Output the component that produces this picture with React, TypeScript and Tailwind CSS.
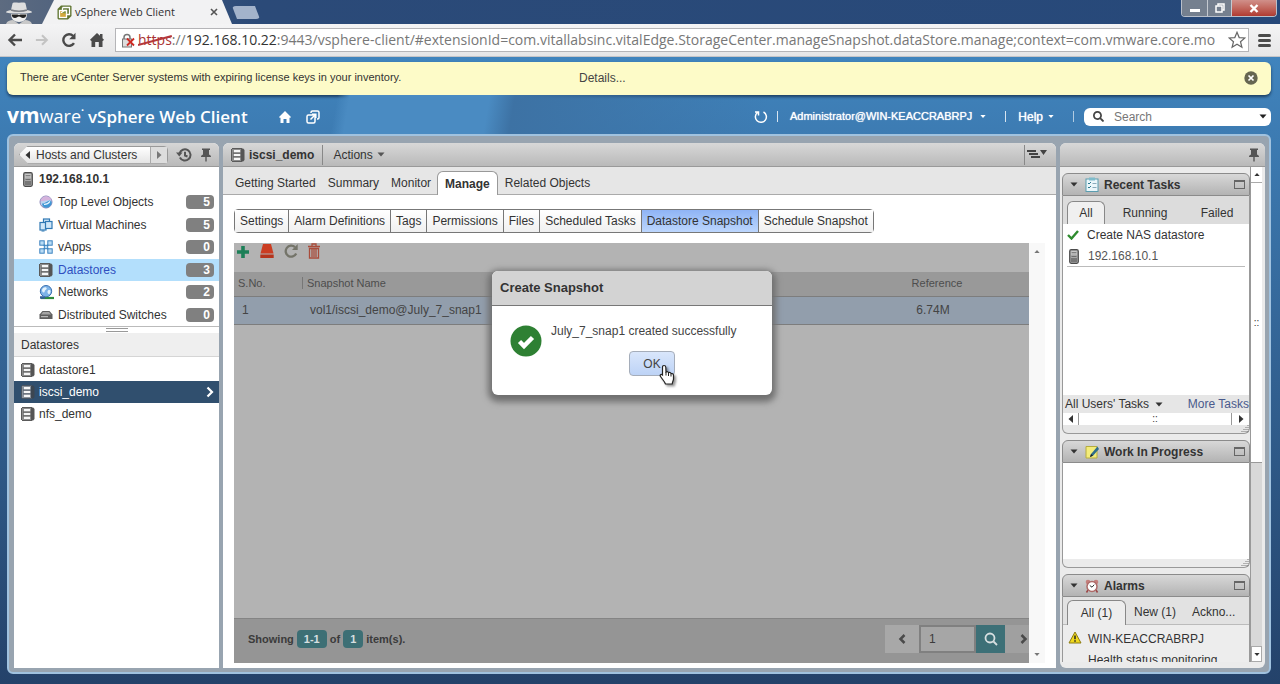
import React from "react";
import { FaHome, FaSearch } from "react-icons/fa";

const SANS = "font-['Liberation_Sans',Arial,sans-serif]";
const HUMAN = "font-['Open_Sans','Noto_Sans',sans-serif]";

function Caret({ className = "" }: { className?: string }) {
  return (
    <svg aria-hidden="true" viewBox="0 0 8 5" className={`h-[5px] w-2 shrink-0 fill-current ${className}`}>
      <path d="M0.5 0.5h7L4 4.5z" />
    </svg>
  );
}

function TriLeft() {
  return (
    <svg aria-hidden="true" viewBox="0 0 5 8" className="h-2 w-[5px] fill-current">
      <path d="M5 0v8L0.5 4z" />
    </svg>
  );
}

function TriRight() {
  return (
    <svg aria-hidden="true" viewBox="0 0 5 8" className="h-2 w-[5px] fill-current">
      <path d="M0 0v8l4.500-4z" />
    </svg>
  );
}

function DatastoreIcon({ light = false }: { light?: boolean }) {
  return (
    <svg aria-hidden="true" viewBox="0 0 14 14" className="h-[14px] w-[14px] shrink-0">
      <path d="M1 1h9v12H1z" fill={light ? "#8a929c" : "#8c8c8c"} />
      <path d="M10 0.500h2.200L13.500 2v10l-1.300 1.500H10z" fill={light ? "#3c4651" : "#555"} />
      <path d="M1 0.500h10M1 13.500h10M0.5 1v12" stroke={light ? "#4b5561" : "#5a5a5a"} />
      <path d="M3 2h6v2.600H3zM3 5.700h6v2.600H3zM3 9.400h6V12H3z" fill="#f6f6f6" />
      <path d="M2 5.100h8M2 8.900h8" stroke={light ? "#4b5561" : "#555"} />
    </svg>
  );
}

function HostIcon() {
  return (
    <svg aria-hidden="true" viewBox="0 0 10 15" className="h-[15px] w-[10px] shrink-0">
      <rect x="0.7" y="0.7" width="8.600" height="13.600" rx="1.500" fill="#a9a9a9" stroke="#4b4b4b" strokeWidth="1.200" />
      <path d="M2.300 2.500h5.400v3.500H2.300z" fill="#e9e9e9" />
      <path d="M2.500 3.500h5M2.500 5h5M2.500 7.500h5" stroke="#555" strokeWidth="0.700" />
      <path d="M2 9h6v4H2z" fill="#777" />
    </svg>
  );
}

function PinIcon() {
  return (
    <svg aria-hidden="true" viewBox="0 0 12 14" className="h-[14px] w-3 fill-[#555]">
      <path d="M2 0.500h8v1.500H9v4.500c1.300.4 2 1.200 2 2.500H1c0-1.300.7-2.100 2-2.500V2H2zM5.300 9h1.400v4.500H5.300z" />
    </svg>
  );
}

function TopLevelIcon() {
  return (
    <svg aria-hidden="true" viewBox="0 0 14 14" className="h-[14px] w-[14px]">
      <circle cx="7" cy="7" r="6" fill="#bcd3f0" stroke="#8a86b8" />
      <path d="M1.500 6C2 2.500 5 1 7.500 1.200 10 1.500 12 3 12.700 5.500 9 4 5 7 1.500 6z" fill="#d5b3dc" />
      <path d="M3 8.500c0 3 2.500 4.500 5 4.200 2.500-.4 4.500-2.500 4.700-5-.2-1.500-1-2.200-2-2.200C9 5.500 6 8.800 3 8.500z" fill="#3f97d4" />
      <path d="M5 9.300c2.500.2 4.500-1 6-3" stroke="#e8f4ff" fill="none" strokeWidth="1.200" />
    </svg>
  );
}

function VmIcon() {
  return (
    <svg aria-hidden="true" viewBox="0 0 14 14" className="h-[14px] w-[14px]">
      <g fill="#cfe6f8" stroke="#2f78b4" strokeWidth="1.200">
        <rect x="4.500" y="1" width="6" height="7" />
        <rect x="1" y="4.500" width="6" height="7.500" />
        <rect x="6.500" y="3.500" width="6.500" height="7" />
      </g>
      <path d="M2.500 13h3" stroke="#2f78b4" />
    </svg>
  );
}

function VAppIcon() {
  return (
    <svg aria-hidden="true" viewBox="0 0 14 14" className="h-[14px] w-[14px]">
      <path d="M4 4l6 6M10 4l-6 6" stroke="#4f8fc6" strokeWidth="1.500" />
      <g fill="#b9dcf6" stroke="#3d83bf">
        <rect x="0.8" y="0.8" width="4.400" height="4.400" />
        <rect x="8.800" y="0.8" width="4.400" height="4.400" />
        <rect x="0.8" y="8.800" width="4.400" height="4.400" />
        <rect x="8.800" y="8.800" width="4.400" height="4.400" />
        <rect x="5.300" y="5.300" width="3.400" height="3.400" />
      </g>
    </svg>
  );
}

function NetworkIcon() {
  return (
    <svg aria-hidden="true" viewBox="0 0 15 15" className="h-[15px] w-[15px]">
      <path d="M2 13h13" stroke="#2f8a3c" strokeWidth="2.200" />
      <path d="M1 12.500h5" stroke="#35609a" strokeWidth="2.500" />
      <circle cx="7" cy="6.200" r="5.700" fill="#7db3e8" stroke="#3a70b0" />
      <path d="M3 5c.5-2 2.500-3 4-2.500s.5 2-.5 2.500S6 7 5 7.500 3 6.500 3 5zM9 5.500c1-.8 2.500-.3 2.500.9S10.500 9.500 9.500 9 8 6.300 9 5.500z" fill="#e4f3fc" />
    </svg>
  );
}

function SwitchIcon() {
  return (
    <svg aria-hidden="true" viewBox="0 0 14 10" className="h-[10px] w-[14px]">
      <path d="M3.500 1h7L13.500 4.500V9h-13V4.500z" fill="#5f5f5f" />
      <path d="M4 2h6l2 2.500H2z" fill="#a5a5a5" />
      <path d="M2 6.700h7" stroke="#ccc" />
    </svg>
  );
}

const inventory = [
  { label: "Top Level Objects", count: 5, icon: <TopLevelIcon /> },
  { label: "Virtual Machines", count: 5, icon: <VmIcon /> },
  { label: "vApps", count: 0, icon: <VAppIcon /> },
  { label: "Datastores", count: 3, icon: <DatastoreIcon />, active: true },
  { label: "Networks", count: 2, icon: <NetworkIcon /> },
  { label: "Distributed Switches", count: 0, icon: <SwitchIcon /> },
];

function BrowserChrome() {
  return (
    <div className={`shrink-0 ${HUMAN}`}>
      <div className="flex h-6 items-start bg-linear-to-r from-[#5d6b80] via-[#2b4a78] via-20% to-[#27497a] pr-[3px]">
        <svg aria-label="Incognito" role="img" viewBox="0 0 30 22" className="mt-[2px] ml-1 h-[22px] w-[30px] shrink-0">
          <path d="M7 8l1.500-6.500C9 0 11 .3 15 .8 19 .3 21 0 21.500 1.500L23 8c3 .8 5 1.300 5 2.200 0 1.800-26 1.800-26 0C2 9.300 4 8.800 7 8z" fill="#dedede" />
          <path d="M7 8c4 1.500 12 1.500 16 0" stroke="#7b7f86" strokeWidth="1.500" fill="none" />
          <path d="M7 12h16c0 5-3 8-8 8s-8-3-8-8z" fill="#eee" />
          <path d="M7.500 12.500h6c.5 0 .9.500 1.500.500s1-.5 1.500-.5h6c-.5 2.500-1.500 3.500-3.500 3.500-1.800 0-2.500-1.500-4-1.500s-2.200 1.500-4 1.500c-2 0-3-1-3.500-3.500z" fill="#222" />
          <path d="M2 22c1-3 4-4 7-4l6 4 6-4c3 0 6 1 7 4z" fill="#c9c9c9" />
        </svg>
        <div className="ml-2 flex h-6 w-[190px] items-center bg-[#f2f2f3] pl-[15px] [clip-path:polygon(12px_0,180px_0,190px_100%,0_100%)]">
          <svg aria-hidden="true" viewBox="0 0 15 15" className="h-[15px] w-[15px] shrink-0">
            <path d="M4 0.500h9.500l1 1V11L11 14.500H1.500l-1-1V4z" fill="#5f7430" />
            <g fill="none" stroke="#fff" strokeWidth="1.300">
              <path d="M5.500 2.500h7v7h-3" />
              <path d="M5.500 5.500v-3" />
              <rect x="2.500" y="5.500" width="7" height="7" fill="#d2a93f" />
              <path d="M4.500 8V7.500l3-2h2v3" fill="#7f9440" />
            </g>
          </svg>
          <span className="ml-[3px] text-[11px] text-[#333]">vSphere Web Client</span>
          <button aria-label="Close tab" className="mr-[14px] ml-auto text-[#555]">
            <svg viewBox="0 0 8 8" className="h-2 w-2">
              <path d="M1 1l6 6M7 1L1 7" stroke="currentColor" strokeWidth="1.600" />
            </svg>
          </button>
        </div>
        <button aria-label="New tab" className="mt-[6px] h-[13px] w-7 rounded-sm bg-[#a3b3cb] [clip-path:polygon(0_0,82%_0,100%_100%,18%_100%)]" />
        <div className="ml-auto flex h-[17px] overflow-hidden rounded-b-sm border border-t-0 border-[#b8bfca]">
          <button aria-label="Minimize" className="flex w-[26px] items-center justify-center border-r border-[#c4c9d0] bg-[#75808f]">
            <span className="mt-1 h-[3px] w-[10px] bg-white" />
          </button>
          <button aria-label="Restore" className="flex w-6 items-center justify-center border-r border-[#c4c9d0] bg-[#75808f]">
            <svg viewBox="0 0 10 10" className="h-[10px] w-[10px]" fill="none" stroke="#fff" strokeWidth="1.500">
              <path d="M3 2.500V1h6v6H7.500" />
              <rect x="1" y="3" width="6" height="6" />
            </svg>
          </button>
          <button aria-label="Close" className="flex w-[44px] items-center justify-center bg-linear-to-b from-[#d0908a] to-[#b03a31]">
            <svg viewBox="0 0 10 9" className="h-[9px] w-[10px]">
              <path d="M1.500 1l7 7M8.500 1l-7 7" stroke="#fff" strokeWidth="2.400" />
            </svg>
          </button>
        </div>
      </div>
      <div className="flex h-[33px] items-center border-b border-[#c5c5c8] bg-linear-to-b from-[#f4f4f5] to-[#e6e6e7] text-[#444]">
        <button aria-label="Back" className="ml-[7px]">
          <svg viewBox="0 0 16 14" className="h-[14px] w-4" fill="none" stroke="#4a4a4a" strokeWidth="2.400">
            <path d="M15 7H2.500M8 1.500L2.500 7 8 12.500" />
          </svg>
        </button>
        <button aria-label="Forward" className="ml-3">
          <svg viewBox="0 0 16 14" className="h-[14px] w-[14px]" fill="none" stroke="#c3c3c3" strokeWidth="2.400">
            <path d="M1 7h12.500M8 1.500L13.500 7 8 12.500" />
          </svg>
        </button>
        <button aria-label="Reload" className="ml-3">
          <svg viewBox="0 0 16 16" className="h-4 w-4">
            <path d="M13 11.200A5.800 5.800 0 1 1 12.200 4" fill="none" stroke="#4a4a4a" strokeWidth="2.400" />
            <path d="M14.500 0.800v6.400H8.200z" fill="#4a4a4a" />
          </svg>
        </button>
        <button aria-label="Home" className="ml-3">
          <svg viewBox="0 0 16 16" className="h-4 w-4 fill-[#4a4a4a]">
            <path d="M8 1l3 2.800V2h2.500v4.200L15 7.800l-1.200 1.200-.3-.3V15H9.800v-5H6.200v5H2.500V8.700l-.3.300L1 7.800z" />
          </svg>
        </button>
        <div className="ml-[10px] flex h-6 min-w-0 flex-1 items-center border border-[#b5b5b8] bg-white pl-[5px] text-sm">
          <svg aria-hidden="true" viewBox="0 0 14 15" className="h-[15px] w-[14px] shrink-0">
            <path d="M3 6V4.500a3 3 0 0 1 6 0V6" fill="none" stroke="#777" strokeWidth="1.500" />
            <rect x="1.500" y="6" width="9" height="8" fill="#ddd" stroke="#777" />
            <path d="M6 5.500l7 7M13 5.500l-7 7" stroke="#cf2a23" strokeWidth="1.800" />
          </svg>
          <label htmlFor="url" className="ml-[3px] flex text-sm">
            <span className="relative text-[#a33]">
              https
              <svg aria-hidden="true" viewBox="0 0 34 14" preserveAspectRatio="none" className="absolute top-1 left-0 h-[14px] w-full">
                <path d="M0 11L34 2" stroke="#b5373a" strokeWidth="2" />
              </svg>
            </span>
            <span className="text-[#777]">://</span>
            <span className="text-[#333]">192.168.10.22</span>
          </label>
          <input
            id="url"
            aria-label="Address"
            className="min-w-0 flex-1 bg-transparent text-sm text-[#777] outline-none"
            defaultValue=":9443/vsphere-client/#extensionId=com.vitallabsinc.vitalEdge.StorageCenter.manageSnapshot.dataStore.manage;context=com.vmware.core.mo"
          />
          <button aria-label="Bookmark" className="mr-[2px]">
            <svg viewBox="0 0 18 18" className="h-[18px] w-[18px]" fill="none" stroke="#666" strokeWidth="1.200">
              <path d="M9 1.300l2.200 5.300 5.700.4-4.400 3.700 1.400 5.600L9 13.200l-4.900 3.100 1.400-5.600L1.100 7l5.700-.4z" />
            </svg>
          </button>
        </div>
        <button aria-label="Menu" className="mx-[9px] flex flex-col gap-[2px]">
          <span className="h-[3px] w-[13px] rounded-sm bg-[#4a4a4a]" />
          <span className="h-[3px] w-[13px] rounded-sm bg-[#4a4a4a]" />
          <span className="h-[3px] w-[13px] rounded-sm bg-[#4a4a4a]" />
        </button>
      </div>
    </div>
  );
}

function Masthead() {
  return (
    <header className="mr-[2px] flex h-[39px] shrink-0 items-center bg-[linear-gradient(100deg,transparent_0,transparent_26%,#4a8bc2_27%,#4a8bc2_38%,#3d72a4_40%,transparent_60%)] pt-1 text-xs text-white">
      <span className={`flex items-baseline text-[17px] ${HUMAN}`}>
        <b className="text-[21px] leading-5">vm</b>
        <span className="text-lg leading-5">ware</span>
        <span className="mr-1 self-start text-[8px]">•</span>
        <span className="font-semibold">vSphere Web Client</span>
      </span>
      <button aria-label="Home" className="ml-[30px]">
        <svg viewBox="0 0 14 14" className="h-[14px] w-[14px] fill-white">
          <path d="M7 1l6 6-1 1-.5-.4V13H8.500V9h-3v4h-3V7.600L2 8 1 7z" />
        </svg>
      </button>
      <button aria-label="Open new window" className="ml-[14px]">
        <svg viewBox="0 0 14 14" className="h-[14px] w-[14px]" fill="none" stroke="#fff" strokeWidth="1.500">
          <path d="M5 3V2.500A1.500 1.500 0 0 1 6.500 1h5A1.500 1.500 0 0 1 13 2.500v5A1.500 1.500 0 0 1 11.500 9H11" />
          <rect x="1" y="5" width="8" height="8" rx="1.500" />
          <path d="M4.500 9.500l5-5M6 4.200h3.800V8" />
        </svg>
      </button>
      <button aria-label="Refresh" className="ml-auto">
        <svg viewBox="0 0 14 14" className="h-[14px] w-[14px]" fill="none" stroke="#fff" strokeWidth="1.500">
          <path d="M9.500 2a5.500 5.500 0 1 1-6 .5M1 2h3.500v3.500" />
        </svg>
      </button>
      <span className="ml-[9px] h-[11px] w-px bg-white/80" />
      <button className="ml-3 flex items-center gap-[7px] text-[11px] [text-shadow:0_0_1px_#fff]">
        Administrator@WIN-KEACCRABRPJ <Caret className="scale-75" />
      </button>
      <span className="ml-[18px] h-[11px] w-px bg-white/80" />
      <button className="ml-3 flex items-center gap-1 [text-shadow:0_0_1px_#fff]">
        Help <Caret className="scale-75" />
      </button>
      <span className="ml-[18px] h-[11px] w-px bg-white/60" />
      <label className="ml-[10px] flex h-[18px] w-[187px] items-center rounded-md bg-white pl-[9px] text-[#555]">
        <FaSearch className="h-[11px] w-[11px] shrink-0 text-[#444]" />
        <input aria-label="Search" placeholder="Search" className="ml-[10px] min-w-0 flex-1 bg-transparent text-xs outline-none placeholder:text-[#777]" />
        <Caret className="mr-1 text-[#222]" />
      </label>
    </header>
  );
}

function Navigator() {
  return (
    <nav className="flex w-[205px] shrink-0 flex-col overflow-hidden rounded-t-md bg-white">
      <div className="flex h-6 shrink-0 items-center border-b border-[#999] bg-linear-to-b from-[#d6d6d6] to-[#b9b9b9] pl-[5px]">
        <div className="flex h-[18px] flex-1 items-stretch rounded-r-sm border border-[#999] bg-linear-to-b from-white to-[#e4e4e4] [clip-path:polygon(0_50%,9px_0,100%_0,100%_100%,9px_100%)]">
          <button className="flex flex-1 items-center gap-[6px] pl-[5px] text-[#333]">
            <TriLeft /> Hosts and Clusters
          </button>
          <button aria-label="Forward" className="flex w-[17px] items-center justify-center border-l border-[#aaa] bg-[#ddd] text-[#777]">
            <TriRight />
          </button>
        </div>
        <button aria-label="Recent objects" className="mx-2">
          <svg viewBox="0 0 16 14" className="h-[14px] w-4" fill="none" stroke="#555" strokeWidth="2">
            <path d="M3.500 5.500a5.600 5.600 0 1 1 .4 4M9 3.800V7.500l2.500 1" />
            <path d="M0 4.500h6.500L3.300 8.500z" fill="#555" stroke="none" />
          </svg>
        </button>
        <button aria-label="Pin" className="mr-[7px]">
          <PinIcon />
        </button>
      </div>
      <div className="flex h-6 shrink-0 items-center gap-[6px] pl-[9px] font-bold text-[#333]">
        <HostIcon /> 192.168.10.1
      </div>
      <ul className="grid h-[135px] shrink-0 grid-rows-6">
        {inventory.map((it) => (
          <li key={it.label} className={it.active ? "flex bg-[#b3dffc]" : "flex"}>
            <a href="#" className={`flex flex-1 items-center pr-[5px] pl-[25px] ${it.active ? "text-[#2f4fc0]" : "text-[#333]"}`}>
              <span className="flex w-[19px] items-center">{it.icon}</span>
              {it.label}
              <span className="ml-auto h-[14px] w-7 rounded-sm bg-[#808080] pr-1 text-right leading-[14px] font-bold text-white">{it.count}</span>
            </a>
          </li>
        ))}
      </ul>
      <div className="flex h-[7px] shrink-0 items-center justify-center border-t border-[#bbb]">
        <span className="h-1 w-[22px] border-y border-[#999]" />
      </div>
      <h2 className="flex h-6 shrink-0 items-center border-b border-[#d5d5d5] bg-[#efefef] pl-[7px] text-[#333]">Datastores</h2>
      <ul className="pt-[2px]">
        {["datastore1", "iscsi_demo", "nfs_demo"].map((name) => {
          const on = name === "iscsi_demo";
          return (
            <li key={name}>
              <a href="#" className={`flex h-[22px] items-center gap-1 pl-[7px] ${on ? "bg-[#304f6e] text-white" : "text-[#333]"}`}>
                <DatastoreIcon light={on} /> {name}
                {on && (
                  <svg aria-hidden="true" viewBox="0 0 8 12" className="mr-[5px] ml-auto h-3 w-2" fill="none" stroke="#fff" strokeWidth="2.200">
                    <path d="M1.500 1.500L6 6l-4.500 4.500" />
                  </svg>
                )}
              </a>
            </li>
          );
        })}
      </ul>
    </nav>
  );
}

const subTabs = ["Settings", "Alarm Definitions", "Tags", "Permissions", "Files", "Scheduled Tasks", "Datastore Snapshot", "Schedule Snapshot"];

function SnapshotDialog() {
  return (
    <div
      role="dialog"
      aria-labelledby="dlg-title"
      className="absolute top-7 left-[258px] flex h-[124px] w-[280px] flex-col rounded-md bg-white shadow-[0_3px_6px_4px_#707070]"
    >
      <h3 id="dlg-title" className="flex h-[35px] items-center rounded-t-md border-b border-[#777] bg-[#d3d3d3] pl-2 text-[13px] font-bold text-[#333]">
        Create Snapshot
      </h3>
      <div className="flex pt-[19px] pl-[18px]">
        <svg aria-hidden="true" viewBox="0 0 32 32" className="h-8 w-8 shrink-0">
          <circle cx="16" cy="16" r="15.500" fill="#2e8033" />
          <path d="M9.500 16.500l4.500 4.500 8.500-8.500" fill="none" stroke="#fff" strokeWidth="4.500" />
        </svg>
        <div className="ml-[9px] text-[#444]">
          <p className="text-xs leading-3">July_7_snap1 created successfully</p>
          <button className="mt-[14px] ml-[78px] h-[25px] w-[46px] rounded-sm border border-[#a5adba] bg-linear-to-b from-[#d9e6fb] to-[#bdd3f6] text-xs">
            OK
          </button>
        </div>
      </div>
      <svg aria-hidden="true" viewBox="0 0 18 22" className="absolute top-[93px] left-[167px] h-[22px] w-[18px] drop-shadow-[2px_2px_1px_rgba(0,0,0,0.4)]">
        <path
          d="M5 1.500c1.200 0 1.700.7 1.800 1.800L7 8c1-.6 2.200-.3 2.500.7 1-.5 2.200-.2 2.500.9 1.300-.4 2.500.3 2.500 1.900V15c0 1.500-1 2.500-1.300 5H6.500C6 18 3.500 15.500 1.500 12.500.5 11 2 9.800 3.500 11V3.300C3.500 2.200 4 1.500 5 1.500z"
          fill="#fff"
          stroke="#222"
          strokeWidth="1.200"
        />
        <path d="M7 8v3.500M9.500 9v3M12 10v2.500" stroke="#222" />
      </svg>
    </div>
  );
}

function Workspace() {
  return (
    <main className="flex min-w-0 flex-1 flex-col overflow-hidden rounded-t-md bg-white text-[#333]">
      <div className="flex h-6 shrink-0 items-center border-b border-[#999] bg-linear-to-b from-[#d8d8d8] to-[#b9b9b9] pl-2">
        <DatastoreIcon />
        <h1 className="ml-1 font-bold">iscsi_demo</h1>
        <button className="ml-2 flex h-5 items-center gap-1 border-l border-[#888] pl-[10px]">
          Actions <Caret className="text-[#555]" />
        </button>
        <button aria-label="View options" className="ml-auto flex h-5 w-8 items-center justify-center border-l border-[#888] pr-2">
          <svg viewBox="0 0 20 9" className="h-[9px] w-5 fill-[#444]">
            <path d="M0 0h9v2H0zM2 3h9v2H2zM4 6h9v2H4zM13 0h7l-3.500 5z" />
          </svg>
        </button>
      </div>
      <div role="tablist" className="flex h-7 shrink-0 items-end border-b border-[#aaa] bg-[#e6e6e6] pl-[6px]">
        <button role="tab" className="h-[23px] px-[6px]">Getting Started</button>
        <button role="tab" className="h-[23px] px-[6px]">Summary</button>
        <button role="tab" className="h-[23px] px-[6px]">Monitor</button>
        <button role="tab" aria-selected="true" className="-mb-px h-6 rounded-t-md border border-b-0 border-[#999] bg-white px-[7px] font-bold">Manage</button>
        <button role="tab" className="h-[23px] px-[7px]">Related Objects</button>
      </div>
      <div className="flex min-h-0 flex-1 flex-col px-[11px] pt-[14px] pb-[5px]">
        <div role="tablist" className="flex h-6 shrink-0 self-start rounded-sm border border-[#777]">
          {subTabs.map((t) => (
            <button
              key={t}
              role="tab"
              className={`border-r border-[#777] px-[5px] last:border-r-0 ${
                t === "Datastore Snapshot" ? "bg-linear-to-b from-[#8fb4f5] to-[#bcd6fd]" : "bg-linear-to-b from-white to-[#f0f0f0]"
              }`}
            >
              {t}
            </button>
          ))}
        </div>
        <div className="mt-[10px] flex min-h-0 flex-1">
          <section className="relative flex min-w-0 flex-1 flex-col bg-[#b3b3b3]">
            <div className="flex h-[29px] shrink-0 items-start gap-[10px] pl-[2px]">
              <button aria-label="Add snapshot" className="pt-[2px]">
                <svg viewBox="0 0 14 14" className="h-[14px] w-[14px]">
                  <path d="M7 1v12M1 7h12" stroke="#1c7f57" strokeWidth="3.600" />
                </svg>
              </button>
              <button aria-label="Restore snapshot">
                <svg viewBox="0 0 14 16" className="h-4 w-[14px]">
                  <path d="M3 1h8l2.500 9.500H.5z" fill="#cb3d22" />
                  <path d="M.3 11.500h13.400V15H.3z" fill="#b5351d" />
                </svg>
              </button>
              <button aria-label="Refresh">
                <svg viewBox="0 0 14 16" className="h-4 w-[14px]">
                  <path d="M12.200 10.500A5.500 5.500 0 1 1 11 4.200" fill="none" stroke="#747469" strokeWidth="2.300" />
                  <path d="M13.700 1v6H8z" fill="#747469" />
                </svg>
              </button>
              <button aria-label="Delete">
                <svg viewBox="0 0 12 16" className="h-4 w-3" fill="none" stroke="#a94c3b" strokeWidth="1.300">
                  <path d="M0 3.500h12M4 3V1h4v2M1.500 5.500h9V15h-9zM4 6v8M6 6v8M8 6v8" />
                </svg>
              </button>
            </div>
            <table className="w-full table-fixed border-collapse text-[#444]">
              <colgroup>
                <col className="w-[68px]" />
                <col />
                <col className="w-48" />
              </colgroup>
              <thead>
                <tr className="h-6 bg-[#999] text-[11px] text-[#4d4d4d]">
                  <th className="pl-1 text-left font-normal">S.No.</th>
                  <th className="text-left font-normal">
                    <span className="border-l border-[#777] pl-1">Snapshot Name</span>
                  </th>
                  <th className="pl-2 text-center font-normal">Reference</th>
                </tr>
              </thead>
              <tbody>
                <tr className="h-7 border-y border-[#7d7d7d] bg-[#929eac]">
                  <td className="pl-2">1</td>
                  <td className="pl-2">vol1/iscsi_demo@July_7_snap1</td>
                  <td className="text-center">6.74M</td>
                </tr>
              </tbody>
            </table>
            <footer className="mt-auto flex h-[45px] items-center border-t border-[#848484] bg-[#959595] pb-1 pl-[14px] text-[11px] font-bold text-[#3b3b3b]">
              Showing
              <span className="mx-[3px] rounded-sm bg-[#3d6f75] px-[7px] py-[2px] text-[#d7dfe0]">1-1</span>
              of
              <span className="mx-[3px] rounded-sm bg-[#3d6f75] px-[7px] py-[2px] text-[#d7dfe0]">1</span>
              item(s).
              <div className="ml-auto flex h-[28px] items-stretch">
                <button aria-label="Previous page" className="flex w-[34px] items-center justify-center bg-[#a8a8a8]">
                  <svg viewBox="0 0 8 10" className="h-[10px] w-2" fill="none" stroke="#4a4a4a" strokeWidth="2.500">
                    <path d="M6.500 1L2.500 5l4 4" />
                  </svg>
                </button>
                <input aria-label="Page" defaultValue="1" className="w-[57px] border-2 border-[#808080] bg-[#a6a6a6] pl-2 text-xs font-normal outline-none" />
                <button aria-label="Go to page" className="flex w-[29px] items-center justify-center bg-[#3d7077]">
                  <svg viewBox="0 0 14 14" className="h-[14px] w-[14px]" fill="none" stroke="#d7dfe0" strokeWidth="1.800">
                    <circle cx="6" cy="6" r="4.500" />
                    <path d="M9.500 9.500L13 13" />
                  </svg>
                </button>
                <button aria-label="Next page" className="flex w-6 items-center justify-end bg-[#a0a0a0] pr-[1px]">
                  <svg viewBox="0 0 8 10" className="h-[10px] w-2" fill="none" stroke="#4a4a4a" strokeWidth="2.500">
                    <path d="M1.500 1l4 4-4 4" />
                  </svg>
                </button>
              </div>
            </footer>
            <SnapshotDialog />
          </section>
          <div aria-hidden="true" className="flex w-4 shrink-0 flex-col items-center justify-between bg-[#f8f8f8] py-[6px] text-[#777]">
            <Caret className="rotate-180 scale-75" />
            <Caret className="scale-75" />
          </div>
        </div>
      </div>
    </main>
  );
}

function PortletHead({ icon, title }: { icon: React.ReactNode; title: string }) {
  return (
    <div className="flex h-[23px] shrink-0 items-center rounded-t-md border border-[#8b8b8b] bg-linear-to-b from-[#d8d8d8] to-[#b3b3b3] pr-1 pl-[7px]">
      <Caret />
      <span className="ml-[7px] flex w-[19px]">{icon}</span>
      <h2 className="font-bold text-[#333]">{title}</h2>
      <button aria-label={`Maximize ${title}`} className="ml-auto h-[9px] w-[11px] border border-t-2 border-[#666]" />
    </div>
  );
}

function Grip() {
  return (
    <svg aria-hidden="true" viewBox="0 0 10 8" className="ml-auto h-2 w-[10px]">
      <path d="M9 0v8M7 2v6M5 4v4M3 6v2" stroke="#777" strokeDasharray="1 1" />
    </svg>
  );
}

function TaskSidebar() {
  return (
    <aside className="flex w-[205px] shrink-0 flex-col overflow-hidden rounded-md bg-[#ebebeb] text-[#333]">
      <div className="flex h-6 shrink-0 items-center justify-end border-b border-[#999] bg-linear-to-b from-[#d8d8d8] to-[#b9b9b9] pr-[5px]">
        <PinIcon />
      </div>
      <div className="flex min-h-0 flex-1 pb-[6px]">
        <div className="flex min-w-0 flex-1 flex-col gap-[6px] overflow-hidden pt-[6px] pl-[2px]">
          <section className="flex h-[261px] shrink-0 flex-col">
            <PortletHead
              title="Recent Tasks"
              icon={
                <svg aria-hidden="true" viewBox="0 0 14 15" className="h-[15px] w-[14px]">
                  <rect x="1" y="2" width="12" height="12.500" fill="#eaf6fa" stroke="#5a9db0" />
                  <path d="M4 0.500h6v3H4z" fill="#7fbccb" />
                  <path d="M3 6l1 1 2-2M3 10l1 1 2-2" stroke="#2d7b91" fill="none" />
                  <path d="M7.500 6.500h4M7.500 10.500h4" stroke="#8ab" />
                </svg>
              }
            />
            <div className="flex min-h-0 flex-1 flex-col rounded-b-md border border-t-0 border-[#999] bg-[#e6e6e6]">
              <div role="tablist" className="flex h-7 shrink-0 items-end bg-[#dcdcdc] pl-1">
                <button role="tab" aria-selected="true" className="h-[23px] w-[38px] rounded-t-md border border-b-0 border-[#888] bg-[#f0f0f0]">All</button>
                <button role="tab" className="h-[23px] flex-1 pl-2">Running</button>
                <button role="tab" className="h-[23px] flex-1 pl-2">Failed</button>
              </div>
              <div className="flex-1 bg-white px-1">
                <div className="flex h-[22px] items-center gap-[6px]">
                  <svg aria-hidden="true" viewBox="0 0 12 10" className="h-[10px] w-3">
                    <path d="M1 5l3.500 3.500L11 1" fill="none" stroke="#2e8b2e" strokeWidth="2.400" />
                  </svg>
                  <span className="pl-[2px]">Create NAS datastore</span>
                </div>
                <div className="flex h-[21px] items-center gap-[9px] border-b border-[#bbb] pl-[2px] text-[#555]">
                  <HostIcon /> 192.168.10.1
                </div>
              </div>
              <div className="flex h-[18px] shrink-0 items-center justify-between pl-[2px] whitespace-nowrap">
                <button className="flex items-center gap-[6px]">
                  All Users' Tasks <Caret />
                </button>
                <a href="#" className="text-[#4a5a8c]">More Tasks</a>
              </div>
              <div aria-hidden="true" className="flex h-3 shrink-0 items-stretch bg-white">
                <span className="flex w-4 items-center justify-center border-r border-[#999]"><TriLeft /></span>
                <span className="flex flex-1 items-center justify-center text-[10px] leading-none">::</span>
                <span className="flex w-[18px] items-center justify-center border-l border-[#999] pl-[2px]"><TriRight /></span>
              </div>
              <Grip />
            </div>
          </section>
          <section className="flex h-32 shrink-0 flex-col">
            <PortletHead
              title="Work In Progress"
              icon={
                <svg aria-hidden="true" viewBox="0 0 14 14" className="h-[14px] w-[14px]">
                  <path d="M1 1.500h11V13H1z" fill="#f3ec7a" stroke="#b6ac3e" />
                  <path d="M12.500 1.500L6 9l-1 3 3-1.200L14 4z" fill="#2f6e8c" />
                  <path d="M5 12l1-3 2 1.800z" fill="#222" />
                </svg>
              }
            />
            <div className="flex flex-1 flex-col justify-end rounded-b-md border border-t-0 border-[#999] bg-[#ebebeb]">
              <div className="flex-1 bg-white" />
              <Grip />
            </div>
          </section>
          <section className="flex shrink-0 flex-col">
            <PortletHead
              title="Alarms"
              icon={
                <svg aria-hidden="true" viewBox="0 0 14 14" className="h-[14px] w-[14px]">
                  <circle cx="3" cy="3" r="2.300" fill="#c47f7c" />
                  <circle cx="11" cy="3" r="2.300" fill="#c47f7c" />
                  <path d="M3 11l-1.500 2.500M11 11l1.500 2.500" stroke="#944" strokeWidth="1.500" />
                  <circle cx="7" cy="7.500" r="5" fill="#fff" stroke="#ad6a68" strokeWidth="1.500" />
                  <path d="M4.800 6.500L7 8.200l2.200-2.500" stroke="#333" fill="none" />
                </svg>
              }
            />
            <div className="border-x border-[#999] bg-[#ededed]">
              <div role="tablist" className="flex h-7 items-end border-b border-[#bbb] bg-[#e2e2e2] pl-1">
                <button role="tab" aria-selected="true" className="-mb-px h-[25px] w-[59px] rounded-t-md border border-b-0 border-[#888] bg-[#ededed]">All (1)</button>
                <button role="tab" className="h-6 px-2">New (1)</button>
                <button role="tab" className="h-6 px-2">Ackno...</button>
              </div>
              <div className="grid grid-cols-[25px_1fr] pt-1">
                <svg aria-label="Warning" role="img" viewBox="0 0 14 13" className="mt-[2px] ml-[5px] h-[13px] w-[14px]">
                  <path d="M7 1l6 11H1z" fill="#f0d81d" stroke="#8c7c12" />
                  <path d="M7 4.500v3.800M7 9.300v1.500" stroke="#222" strokeWidth="1.500" />
                </svg>
                <p className="leading-[21px]">
                  WIN-KEACCRABRPJ
                  <br />
                  Health status monitoring
                </p>
              </div>
            </div>
          </section>
        </div>
        <div aria-hidden="true" className="mr-[3px] flex w-3 shrink-0 flex-col border-l border-[#999] bg-[#d8d8d8]">
          <span className="flex h-4 items-center justify-center border-b border-[#aaa] bg-white"><Caret className="rotate-180 scale-75" /></span>
          <span className="flex h-[280px] items-center justify-center border-b border-[#999] bg-white text-[10px]">::</span>
          <span className="mt-auto flex h-4 items-center justify-center border border-[#aaa] bg-white"><Caret className="scale-75" /></span>
        </div>
      </div>
    </aside>
  );
}

export default function App() {
  return (
    <div className={`flex h-screen flex-col overflow-hidden bg-[#264468] text-xs ${SANS}`}>
      <BrowserChrome />
      <div className="flex min-h-0 flex-1 flex-col bg-linear-to-b from-[#4084bd] via-[#386fa3] via-30% to-[#24426a] px-[7px] pt-[5px] pb-[10px]">
        <div role="alert" className="mr-[2px] flex h-[33px] shrink-0 items-center rounded-md bg-[#fdfbc8] pr-[13px] pb-[2px] pl-[13px] text-xs text-[#333] shadow-[0_2px_3px_#1d3f63]">
          <span className="w-[559px] shrink-0 text-[11px]">There are vCenter Server systems with expiring license keys in your inventory.</span>
          <a href="#" className="text-[#444]">Details...</a>
          <button aria-label="Dismiss" className="ml-auto">
            <svg viewBox="0 0 14 14" className="h-[14px] w-[14px]">
              <circle cx="7" cy="7" r="6.700" fill="#666651" />
              <path d="M4.500 4.500l5 5M9.500 4.500l-5 5" stroke="#fff" strokeWidth="1.700" />
            </svg>
          </button>
        </div>
        <Masthead />
        <div className="mr-[2px] flex min-h-0 flex-1 gap-1 rounded-md border-2 border-[#a0c2df] bg-[#98a4b0] pt-[7px] pr-1 pb-1 pl-[5px]">
          <Navigator />
          <Workspace />
          <TaskSidebar />
        </div>
      </div>
    </div>
  );
}
